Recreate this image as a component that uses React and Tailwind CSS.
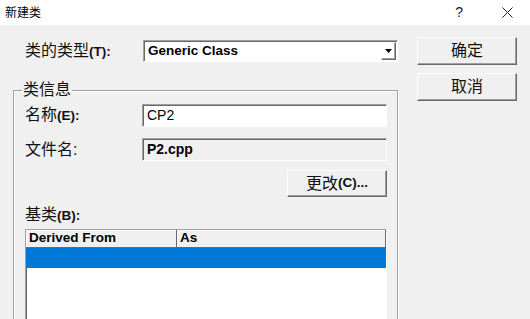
import React from 'react'

const raised = 'border border-t-white border-l-white border-b-[#696969] border-r-[#696969] shadow-[inset_-1px_-1px_0_#a0a0a0]'
const sunken = 'border border-t-[#a0a0a0] border-l-[#a0a0a0] border-b-white border-r-white shadow-[inset_1px_1px_0_#696969]'

function Label({ cn, hot, w = 'w-[118px]' }) {
  return (
    <div className={`${w} shrink-0 text-[16px] leading-[16px] text-[#111]`}>
      {cn}
      {hot && <span className="font-bold text-[13.5px]">{hot}</span>}
    </div>
  )
}

function Button({ children, className = '' }) {
  return (
    <button className={`${raised} bg-[#f0f0f0] w-[100px] flex items-center justify-center text-[16px] text-[#111] ${className}`}>
      {children}
    </button>
  )
}

export default function App() {
  return (
    <div className="w-[530px] h-[319px] overflow-hidden bg-[#f0f0f0] flex flex-col font-['Liberation_Sans','Noto_Sans_CJK_SC',sans-serif]">
      <div className="h-[25px] shrink-0 bg-white flex items-center pl-[5px] pr-[17px]">
        <span className="text-[12px] text-black">新建类</span>
        <span className="ml-auto text-[14px] text-[#222] mr-[39px]">?</span>
        <svg width="11" height="11" viewBox="0 0 11 11" className="text-[#222]">
          <path d="M0.5 0.5 L10.5 10.5 M10.5 0.5 L0.5 10.5" stroke="currentColor" strokeWidth="1" />
        </svg>
      </div>

      <div className="flex-1 flex pl-[13px] pt-[12px] gap-[19px]">
        <div className="w-[385px] shrink-0 flex flex-col">
          <div className="flex items-center mt-[3px] pl-[12px] h-[22px]">
            <Label cn="类的类型" hot="(T):" />
            <div className={`${sunken} bg-white flex-1 h-[22px] flex items-center pl-[4px] pr-[1px]`}>
              <span className="font-bold text-[13.5px] text-black">Generic Class</span>
              <div className={`${raised} ml-auto w-[15px] h-[18px] flex items-center justify-center`}>
                <svg width="7" height="4" viewBox="0 0 7 4">
                  <path d="M0 0 H7 L3.5 4 Z" fill="#000" />
                </svg>
              </div>
            </div>
          </div>

          <fieldset className="mt-[20px] border border-[#a0a0a0] shadow-[inset_1px_1px_0_#fff,1px_1px_0_#fff] pl-[11px] pr-[10px] flex flex-col">
            <legend className="-ml-[3px] px-[1px] text-[16px] leading-[16px] text-[#111]">类信息</legend>
            <div className="flex items-center mt-[6px] h-[23px]">
              <Label cn="名称" hot="(E):" w="w-[117px]" />
              <div className={`${sunken} bg-white flex-1 h-[23px] flex items-center pl-[4px]`}>
                <span className="text-[14px] text-black">CP2</span>
              </div>
            </div>
            <div className="flex items-center mt-[11px] h-[23px]">
              <Label cn="文件名:" w="w-[117px]" />
              <div className={`${sunken} flex-1 h-[23px] flex items-center pl-[4px]`}>
                <span className="font-bold text-[14px] text-black">P2.cpp</span>
              </div>
            </div>
            <div className="flex justify-end mt-[9px]">
              <Button className="h-[27px]">
                更改<span className="font-bold text-[13.5px]">(C)...</span>
              </Button>
            </div>
            <div className="mt-[10px]">
              <Label cn="基类" hot="(B):" w="w-auto" />
            </div>
            <div className={`${sunken} bg-white mt-[5px] h-[140px] flex flex-col`}>
              <div className="flex h-[18px] bg-[#f0f0f0] border-b border-[#696969]">
                <div className="w-[151px] border-r border-[#696969] shadow-[inset_1px_1px_0_#fff] pl-[3px] flex items-center">
                  <span className="font-bold text-[13.5px] text-black">Derived From</span>
                </div>
                <div className="flex-1 border-r border-[#696969] shadow-[inset_1px_1px_0_#fff] pl-[3px] flex items-center">
                  <span className="font-bold text-[13.5px] text-black">As</span>
                </div>
              </div>
              <div className="h-[20px] bg-[#0078d7]" />
            </div>
          </fieldset>
        </div>

        <div className="flex flex-col gap-[8px]">
          <Button className="h-[28px]">确定</Button>
          <Button className="h-[28px]">取消</Button>
        </div>
      </div>
    </div>
  )
}
